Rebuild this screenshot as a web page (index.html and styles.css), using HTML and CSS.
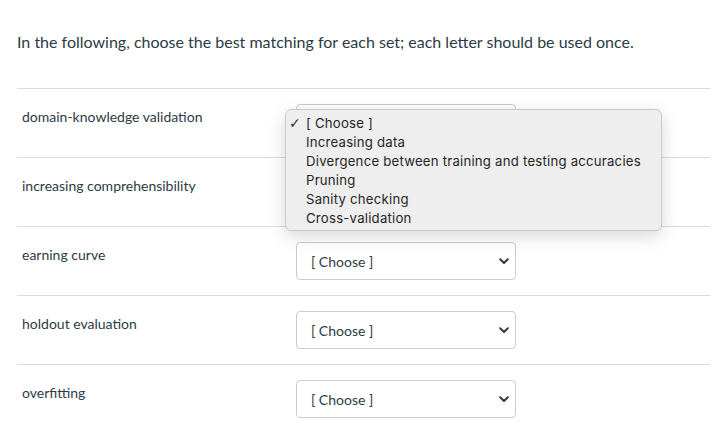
FILE: index.html
```html
<!DOCTYPE html>
<html lang="en">
<head>
<meta charset="utf-8">
<title>Matching question</title>
<link rel="stylesheet" href="styles.css">
</head>
<body>
<div class="question">
  <p class="prompt">In the following, choose the best matching for each set; each letter should be used once.</p>
  <div class="answers">
    <div class="row">
      <div class="label">domain-knowledge validation</div>
      <div class="select-wrap">
        <div class="select"><span>[ Choose ]</span><svg class="chev" width="10" height="7" viewBox="0 0 10 7"><path d="M1.2 1.3 L5 5 L8.8 1.3" fill="none" stroke="#2d3b45" stroke-width="2" stroke-linecap="round" stroke-linejoin="round"/></svg></div>
        <ul class="menu">
          <li class="item selected"><span class="check">✓</span>[ Choose ]</li>
          <li class="item"><span class="check"></span>Increasing data</li>
          <li class="item"><span class="check"></span>Divergence between training and testing accuracies</li>
          <li class="item"><span class="check"></span>Pruning</li>
          <li class="item"><span class="check"></span>Sanity checking</li>
          <li class="item"><span class="check"></span>Cross-validation</li>
        </ul>
      </div>
    </div>
    <div class="row">
      <div class="label">increasing comprehensibility</div>
      <div class="select-wrap">
        <div class="select"><span>[ Choose ]</span><svg class="chev" width="10" height="7" viewBox="0 0 10 7"><path d="M1.2 1.3 L5 5 L8.8 1.3" fill="none" stroke="#2d3b45" stroke-width="2" stroke-linecap="round" stroke-linejoin="round"/></svg></div>
      </div>
    </div>
    <div class="row">
      <div class="label">earning curve</div>
      <div class="select-wrap">
        <div class="select"><span>[ Choose ]</span><svg class="chev" width="10" height="7" viewBox="0 0 10 7"><path d="M1.2 1.3 L5 5 L8.8 1.3" fill="none" stroke="#2d3b45" stroke-width="2" stroke-linecap="round" stroke-linejoin="round"/></svg></div>
      </div>
    </div>
    <div class="row">
      <div class="label">holdout evaluation</div>
      <div class="select-wrap">
        <div class="select"><span>[ Choose ]</span><svg class="chev" width="10" height="7" viewBox="0 0 10 7"><path d="M1.2 1.3 L5 5 L8.8 1.3" fill="none" stroke="#2d3b45" stroke-width="2" stroke-linecap="round" stroke-linejoin="round"/></svg></div>
      </div>
    </div>
    <div class="row">
      <div class="label">overfitting</div>
      <div class="select-wrap">
        <div class="select"><span>[ Choose ]</span><svg class="chev" width="10" height="7" viewBox="0 0 10 7"><path d="M1.2 1.3 L5 5 L8.8 1.3" fill="none" stroke="#2d3b45" stroke-width="2" stroke-linecap="round" stroke-linejoin="round"/></svg></div>
      </div>
    </div>
  </div>
</div>
</body>
</html>
```

FILE: styles.css
```css
html, body {
  margin: 0;
  padding: 0;
  background: #ffffff;
}

body {
  font-family: Lato, "Liberation Sans", sans-serif;
  color: #2d3b45;
}

.question {
  padding: 32px 4px 0 17px;
}

.prompt {
  margin: 0 0 36px 0;
  font-size: 16px;
  line-height: 20px;
}

.answers {
  display: flex;
  flex-direction: column;
}

.row {
  display: flex;
  height: 69px;
  box-sizing: border-box;
  border-top: 1px solid #d9dcdf;
}

.label {
  width: 274px;
  padding: 19px 0 0 5px;
  font-size: 14px;
  line-height: 18px;
}

.select-wrap {
  position: relative;
  margin-top: 15px;
  height: 38px;
}

.select {
  width: 220px;
  height: 38px;
  box-sizing: border-box;
  border: 1px solid #c7cdd1;
  border-radius: 4px;
  display: flex;
  align-items: center;
  justify-content: space-between;
  padding: 0 6px 0 14px;
  font-size: 14px;
  color: #2d3b45;
  background: #fff;
}

.chev {
  display: block;
}

.menu {
  position: absolute;
  left: -11px;
  top: 5px;
  width: 377px;
  height: 122px;
  box-sizing: border-box;
  margin: 0;
  padding: 4px 0;
  list-style: none;
  background: #eeeeee;
  border: 1px solid #c9c9c9;
  border-radius: 6px;
  box-shadow: 0 5px 18px rgba(0, 0, 0, 0.16);
  font-family: Inter, "Noto Sans", sans-serif;
  font-size: 13.2px;
  letter-spacing: 0.22px;
  color: #262626;
  z-index: 10;
}

.item {
  display: flex;
  align-items: center;
  height: 19px;
  line-height: 19px;
  padding-left: 3px;
  white-space: nowrap;
}

.check {
  width: 17px;
  font-family: "DejaVu Sans", sans-serif;
  font-size: 14px;
  letter-spacing: 0;
  color: #333;
}
```
